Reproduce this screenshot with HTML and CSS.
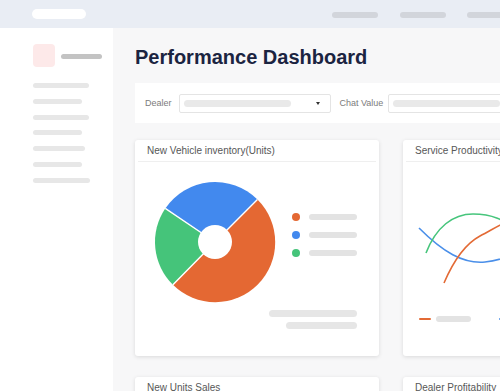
FILE: index.html
```html
<!DOCTYPE html>
<html lang="en">
<head>
<meta charset="utf-8">
<title>Performance Dashboard</title>
<link rel="stylesheet" href="styles.css">
</head>
<body>
<div class="page">
  <header class="topbar">
    <div class="logo-pill"></div>
    <nav class="top-links"><span></span><span></span><span></span></nav>
  </header>
  <div class="layout">
    <aside class="sidebar">
      <div class="brand"><div class="brand-icon"></div><div class="brand-name"></div></div>
      <ul class="menu">
        <li class="w56"></li>
        <li class="w49"></li>
        <li class="w56"></li>
        <li class="w49"></li>
        <li class="w52"></li>
        <li class="w49"></li>
        <li class="w57"></li>
      </ul>
    </aside>
    <main class="main">
      <h1 class="title">Performance Dashboard</h1>
      <div class="filters">
        <span class="label">Dealer</span>
        <div class="select first"><span class="sbar"></span><span class="caret"></span></div>
        <span class="label second">Chat Value</span>
        <div class="select last"><span class="sbar"></span><span class="caret"></span></div>
      </div>
      <div class="grid">
        <section class="card">
          <div class="card-head">New Vehicle inventory(Units)</div>
          <div class="card-body">
            <div class="donut-row">
              <svg class="donut" width="120" height="120" viewBox="0 0 120 120">
                <path d="M60,60 L102.43,17.57 A60,60 0 0 1 17.95,102.80 Z" fill="#e46833"/>
                <path d="M60,60 L17.95,102.80 A60,60 0 0 1 10.26,26.45 Z" fill="#45c47a"/>
                <path d="M60,60 L10.26,26.45 A60,60 0 0 1 102.43,17.57 Z" fill="#4289ee"/>
                <path d="M60,60 L102.43,17.57 M60,60 L17.95,102.80 M60,60 L10.26,26.45" stroke="#fff" stroke-width="1.4"/>
                <circle cx="60" cy="60" r="17" fill="#fff"/>
              </svg>
              <div class="legend">
                <div class="legend-item"><span class="dot orange"></span><span class="lbar"></span></div>
                <div class="legend-item"><span class="dot blue"></span><span class="lbar"></span></div>
                <div class="legend-item"><span class="dot green"></span><span class="lbar"></span></div>
              </div>
            </div>
            <div class="summary">
              <span class="sum-bar long"></span>
              <span class="sum-bar short"></span>
            </div>
          </div>
        </section>
        <section class="card">
          <div class="card-head">Service Productivity</div>
          <div class="chart-body">
            <svg class="lines" width="244" height="146" viewBox="0 0 244 146">
              <path d="M16,66 C40,90 60,102 82,100 S120,88 140,70" fill="none" stroke="#4a8fe9" stroke-width="1.6"/>
              <path d="M23,91 C33,65 50,52 70,52 S100,58 115,68" fill="none" stroke="#47c57c" stroke-width="1.6"/>
              <path d="M41,121 C50,100 62,82 77,74 S105,58 120,52" fill="none" stroke="#e36a35" stroke-width="1.6"/>
            </svg>
            <div class="line-legend">
              <span class="lline orange"></span><span class="lbar short"></span>
              <span class="lline blue gap"></span><span class="lbar short"></span>
            </div>
          </div>
        </section>
        <section class="card">
          <div class="card-head">New Units Sales</div>
        </section>
        <section class="card">
          <div class="card-head">Dealer Profitability</div>
        </section>
      </div>
    </main>
  </div>
</div>
</body>
</html>
```
FILE: styles.css
```css
html, body {
  margin: 0;
  width: 500px;
  height: 391px;
  overflow: hidden;
}
body {
  font-family: "Liberation Sans", Arial, sans-serif;
  background: #f7f7f8;
}
.page {
  width: 660px;
  height: 391px;
  display: flex;
  flex-direction: column;
}
.topbar {
  height: 28px;
  flex: none;
  background: #e9edf4;
  display: flex;
  align-items: center;
}
.logo-pill {
  width: 54px;
  height: 10px;
  border-radius: 5px;
  background: #fff;
  margin-left: 32px;
}
.top-links {
  display: flex;
  gap: 21.5px;
  margin-left: 246px;
  margin-top: 1px;
}
.top-links span {
  width: 46px;
  height: 6px;
  border-radius: 3px;
  background: #d2d5db;
}
.layout {
  flex: 1;
  display: flex;
  min-height: 0;
}
.sidebar {
  width: 113px;
  flex: none;
  background: #fff;
  padding: 16px 0 0 33px;
  box-sizing: border-box;
}
.brand {
  display: flex;
  align-items: center;
  gap: 6px;
}
.brand-icon {
  width: 22px;
  height: 23px;
  border-radius: 4px;
  background: #fde9e9;
}
.brand-name {
  width: 41px;
  height: 5px;
  border-radius: 3px;
  background: #c3c3c3;
  margin-top: 2px;
}
.menu {
  list-style: none;
  margin: 16px 0 0;
  padding: 0;
  display: flex;
  flex-direction: column;
  gap: 10.8px;
}
.menu li {
  height: 5px;
  border-radius: 3px;
  background: #e7e7e7;
}
.w56 { width: 56px; }
.w49 { width: 49px; }
.w52 { width: 52px; }
.w57 { width: 57px; }
.main {
  flex: 1;
  min-width: 0;
  padding: 16.7px 13px 0 22px;
}
.title {
  margin: 0;
  font-size: 20px;
  line-height: 24px;
  font-weight: 700;
  color: #1b2441;
}
.filters {
  margin-top: 14.3px;
  width: 512px;
  height: 40px;
  background: #fff;
  display: flex;
  align-items: center;
  padding-left: 10px;
  box-sizing: border-box;
}
.label {
  font-size: 9px;
  color: #7c7c7c;
}
.label.second {
  margin-left: 9px;
}
.select {
  width: 152px;
  height: 19px;
  border: 1px solid #e4e4e4;
  border-radius: 2px;
  box-sizing: border-box;
  display: flex;
  align-items: center;
  padding-left: 4px;
  margin-top: 1px;
}
.select.first { margin-left: 7px; }
.select.last { margin-left: 5px; }
.sbar {
  width: 107px;
  height: 7px;
  border-radius: 4px;
  background: #e9e9e9;
}
.caret {
  width: 0;
  height: 0;
  border-left: 2.5px solid transparent;
  border-right: 2.5px solid transparent;
  border-top: 3px solid #333;
  margin-left: auto;
  margin-right: 10px;
}
.grid {
  display: grid;
  grid-template-columns: 244px 244px;
  column-gap: 24px;
  row-gap: 21px;
  margin-top: 17px;
}
.card {
  background: #fff;
  border-radius: 3px;
  box-shadow: 0 1px 4px rgba(0, 0, 0, 0.12);
  height: 216px;
}
.card-head {
  height: 22px;
  box-sizing: border-box;
  margin: 0 3px;
  padding-left: 9px;
  font-size: 10px;
  line-height: 21px;
  color: #575757;
  border-bottom: 1px solid #efefef;
  white-space: nowrap;
}
.card-body {
  display: flex;
  flex-direction: column;
  padding: 20px 22px 0 19.5px;
}
.donut-row {
  display: flex;
  align-items: flex-start;
}
.donut {
  display: block;
  overflow: visible;
}
.legend {
  margin-left: auto;
  margin-top: 31px;
  display: flex;
  flex-direction: column;
  gap: 9.8px;
}
.legend-item {
  display: flex;
  align-items: center;
  gap: 9px;
  height: 8px;
}
.dot {
  width: 8px;
  height: 8px;
  border-radius: 50%;
}
.dot.orange { background: #e46833; }
.dot.blue { background: #4289ee; }
.dot.green { background: #45c47a; }
.lbar {
  width: 48px;
  height: 6px;
  border-radius: 3px;
  background: #e3e3e3;
}
.lbar.short { width: 35px; }
.summary {
  display: flex;
  flex-direction: column;
  align-items: flex-end;
  gap: 5px;
  margin-top: 8px;
}
.sum-bar {
  height: 7px;
  border-radius: 4px;
  background: #e6e6e6;
}
.sum-bar.long { width: 88px; }
.sum-bar.short { width: 71px; }
.chart-body {
  display: flex;
  flex-direction: column;
}
.lines {
  display: block;
}
.line-legend {
  display: flex;
  align-items: center;
  gap: 5px;
  padding-left: 16px;
  margin-top: 8px;
  height: 6px;
}
.lline {
  width: 12px;
  height: 2px;
  border-radius: 1px;
}
.lline.orange { background: #e36a35; }
.lline.blue { background: #4a8fe9; }
.lline.gap { margin-left: 23px; }
```
